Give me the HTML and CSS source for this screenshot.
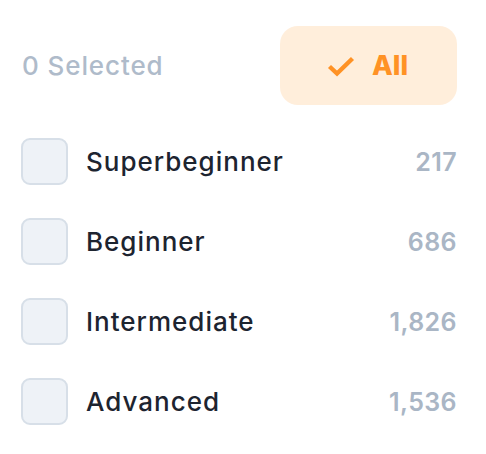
FILE: index.html
```html
<!DOCTYPE html>
<html>
<head>
<meta charset="utf-8">
<link rel="stylesheet" href="styles.css">
</head>
<body>
<div class="panel">
  <div class="header">
    <span class="selected">0 Selected</span>
    <button class="all-btn">
      <svg class="check" width="28" height="22" viewBox="0 0 28 22"><path d="M2.5 11.5 L10 18.5 L25.5 3.5" fill="none" stroke="#FF9225" stroke-width="4.4" stroke-linecap="butt" stroke-linejoin="miter"/></svg>
      <span>All</span>
    </button>
  </div>
  <ul class="list">
    <li class="row"><span class="box"></span><span class="label">Superbeginner</span><span class="count">217</span></li>
    <li class="row"><span class="box"></span><span class="label">Beginner</span><span class="count">686</span></li>
    <li class="row"><span class="box"></span><span class="label">Intermediate</span><span class="count">1,826</span></li>
    <li class="row"><span class="box"></span><span class="label">Advanced</span><span class="count">1,536</span></li>
  </ul>
</div>
</body>
</html>
```
FILE: styles.css
```css
* { box-sizing: border-box; }
html, body { margin: 0; padding: 0; background: #fff; }
body { font-family: "Inter", "Liberation Sans", sans-serif; }
.panel { width: 486px; padding: 26px 29px 0 21px; }
.header { display: flex; align-items: center; justify-content: space-between; height: 79px; padding-left: 1px; }
.selected { font-size: 26px; font-weight: 500; color: #AFBBCA; letter-spacing: 0.9px; }
.all-btn {
  width: 177px; height: 79px; border: none; border-radius: 18px;
  background: #FFEEDB; display: flex; align-items: center; justify-content: center; gap: 17px;
  font-family: inherit; font-size: 27px; font-weight: 800; color: #FF9225; padding: 0 2px 0 0;
}
.check { display: block; }
.list { list-style: none; margin: 33px 0 0; padding: 0; display: flex; flex-direction: column; gap: 33px; }
.row { display: flex; align-items: center; height: 47px; }
.box { width: 47px; height: 47px; border: 2px solid #D7DFE8; background: #EEF2F7; border-radius: 9px; flex: none; }
.label { margin-left: 18px; flex: 1; font-size: 26px; font-weight: 500; color: #1D2430; letter-spacing: 1px; }
.count { font-size: 25px; font-weight: 600; color: #AAB6C5; letter-spacing: 0.4px; }
```
